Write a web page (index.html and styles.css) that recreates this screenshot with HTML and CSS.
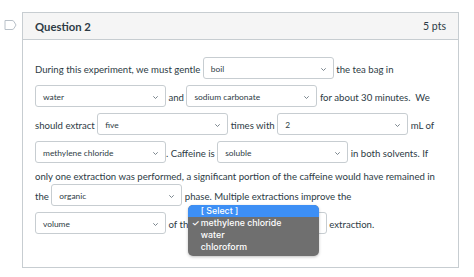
FILE: index.html
```html
<!DOCTYPE html>
<html>
<head>
<meta charset="utf-8">
<link rel="stylesheet" href="styles.css">
</head>
<body>
<div class="page">
  <svg class="flag" width="13" height="12" viewBox="0 0 13 12">
    <path d="M1 1.5 H8 Q9 1.5 9.8 2.3 L12 6 L9.8 9.7 Q9 10.5 8 10.5 H1 Z" fill="none" stroke="#b8c0c8" stroke-width="1"/>
  </svg>
  <div class="card">
    <div class="card-head">
      <span class="title">Question 2</span>
      <span class="pts">5 pts</span>
    </div>
    <div class="card-body">
      <p class="text"><span>During this experiment, we must gentle</span> <span class="sel"><span class="val">boil</span><svg class="chev" width="5" height="3" viewBox="0 0 5 3"><polyline points="0.3,0.3 2.5,2.5 4.7,0.3" fill="none" stroke="#6b7780" stroke-width="0.9"/></svg></span> <span>the tea bag in</span> <span class="sel"><span class="val">water</span><svg class="chev" width="5" height="3" viewBox="0 0 5 3"><polyline points="0.3,0.3 2.5,2.5 4.7,0.3" fill="none" stroke="#6b7780" stroke-width="0.9"/></svg></span> <span>and</span> <span class="sel"><span class="val">sodium carbonate</span><svg class="chev" width="5" height="3" viewBox="0 0 5 3"><polyline points="0.3,0.3 2.5,2.5 4.7,0.3" fill="none" stroke="#6b7780" stroke-width="0.9"/></svg></span> <span>for about 30 minutes.&nbsp; We</span> <span>should extract</span> <span class="sel"><span class="val">five</span><svg class="chev" width="5" height="3" viewBox="0 0 5 3"><polyline points="0.3,0.3 2.5,2.5 4.7,0.3" fill="none" stroke="#6b7780" stroke-width="0.9"/></svg></span> <span>times with</span> <span class="sel"><span class="val">2</span><svg class="chev" width="5" height="3" viewBox="0 0 5 3"><polyline points="0.3,0.3 2.5,2.5 4.7,0.3" fill="none" stroke="#6b7780" stroke-width="0.9"/></svg></span> <span>mL of</span> <span class="sel"><span class="val">methylene chloride</span><svg class="chev" width="5" height="3" viewBox="0 0 5 3"><polyline points="0.3,0.3 2.5,2.5 4.7,0.3" fill="none" stroke="#6b7780" stroke-width="0.9"/></svg></span><span>. Caffeine is</span> <span class="sel"><span class="val">soluble</span><svg class="chev" width="5" height="3" viewBox="0 0 5 3"><polyline points="0.3,0.3 2.5,2.5 4.7,0.3" fill="none" stroke="#6b7780" stroke-width="0.9"/></svg></span> <span>in both solvents. If</span> <span>only one extraction was performed, a significant portion of the caffeine would have remained in</span> <span>the</span> <span class="sel"><span class="val">organic</span><svg class="chev" width="5" height="3" viewBox="0 0 5 3"><polyline points="0.3,0.3 2.5,2.5 4.7,0.3" fill="none" stroke="#6b7780" stroke-width="0.9"/></svg></span> <span>phase. Multiple extractions improve the</span> <span class="sel"><span class="val">volume</span><svg class="chev" width="5" height="3" viewBox="0 0 5 3"><polyline points="0.3,0.3 2.5,2.5 4.7,0.3" fill="none" stroke="#6b7780" stroke-width="0.9"/></svg></span> <span>of the</span> <span class="sel open"><span class="val">methylene chloride</span><svg class="chev" width="5" height="3" viewBox="0 0 5 3"><polyline points="0.3,0.3 2.5,2.5 4.7,0.3" fill="none" stroke="#6b7780" stroke-width="0.9"/></svg><span class="menu"><span class="opt hl">[ Select ]</span><span class="opt"><span class="check">✓</span>methylene chloride</span><span class="opt">water</span><span class="opt">chloroform</span></span></span> <span>extraction.</span></p>
    </div>
  </div>
</div>
</body>
</html>
```

FILE: styles.css
```css
html, body {
  margin: 0;
  padding: 0;
  background: #ffffff;
}

body {
  font-family: Lato, "Noto Sans", sans-serif;
  color: #2d3b45;
}

.page {
  display: flex;
  align-items: flex-start;
  padding: 12px 15px 0 4px;
  gap: 5px;
}

.flag {
  margin-top: 7px;
  flex: none;
}

.card {
  width: 437px;
  height: 256px;
  box-sizing: border-box;
  border: 1px solid #c7cdd1;
}

.card-head {
  display: flex;
  justify-content: space-between;
  align-items: center;
  height: 26px;
  padding: 0 12px;
  background: #f5f5f5;
  border-bottom: 1px solid #c7cdd1;
}

.title {
  font-size: 11.3px;
  font-weight: 700;
  color: #2d3b45;
}

.pts {
  font-size: 10.5px;
  color: #2d3b45;
}

.card-body {
  padding: 17px 12px 0 12px;
}

.text {
  margin: 0;
  font-size: 9.6px;
  line-height: 15px;
}

.sel {
  position: relative;
  display: inline-flex;
  align-items: center;
  justify-content: space-between;
  box-sizing: border-box;
  width: 131px;
  height: 22px;
  margin: 0 0 6px 0;
  padding: 1px 7px 0 7px;
  vertical-align: middle;
  border: 1px solid #c7cdd1;
  border-radius: 3px;
  background: #ffffff;
  font-size: 8.4px;
  line-height: 10px;
}

.chev {
  margin-top: 1px;
}

.menu {
  position: absolute;
  left: -9px;
  top: -8px;
  width: 131px;
  display: flex;
  flex-direction: column;
  padding: 0 0 3px 0;
  background: #6f6f6f;
  border-radius: 5px;
  overflow: hidden;
  box-shadow: 0 1px 3px rgba(0, 0, 0, 0.25);
  font-family: Inter, "Noto Sans", sans-serif;
  font-weight: 500;
  font-size: 8.8px;
  line-height: 12px;
  color: #ffffff;
  z-index: 2;
}

.opt {
  position: relative;
  padding-left: 13px;
}

.opt.hl {
  background: #3d8ff5;
}

.check {
  position: absolute;
  left: 4px;
  top: 0;
}
```
